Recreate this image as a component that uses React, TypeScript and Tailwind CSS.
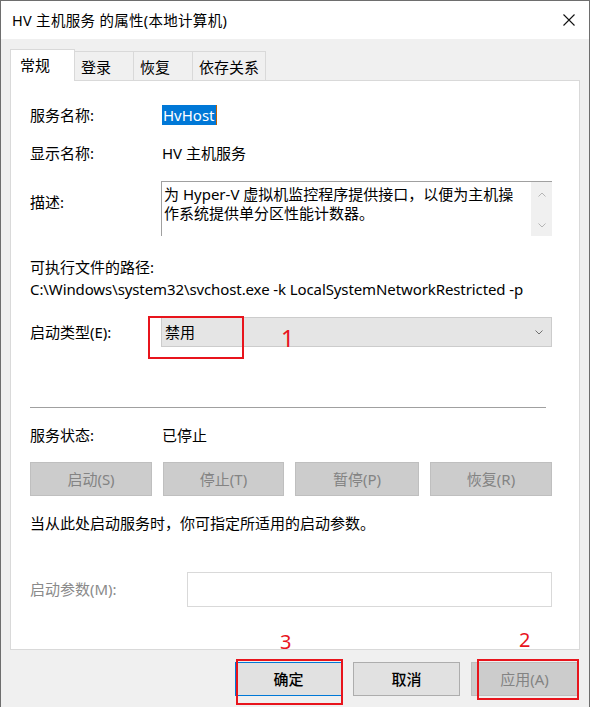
const FONT = "font-[family-name:'Noto_Sans','Noto_Sans_CJK_SC',sans-serif]";

function Tab({ label, active, width }: { label: string; active?: boolean; width: string }) {
  return active ? (
    <div className={`${width} h-[32px] -mb-px z-10 bg-white border border-b-0 border-[#d9d9d9] pl-[9px] pt-[3px] leading-[24px]`}>
      {label}
    </div>
  ) : (
    <div className={`${width} h-[29px] bg-[#f0f0f0] border border-b-0 border-l-0 border-[#d9d9d9] pl-[6px] pt-[3px] leading-[24px]`}>
      {label}
    </div>
  );
}

function Row({ label, children, className = "" }: { label: string; children?: React.ReactNode; className?: string }) {
  return (
    <div className={`flex h-[24px] items-center leading-[24px] ${className}`}>
      <div className="w-[132px] shrink-0">{label}</div>
      {children}
    </div>
  );
}

function Chevron({ up, className = "" }: { up?: boolean; className?: string }) {
  return (
    <svg width="8" height="5" viewBox="0 0 8 5" className={className}>
      <path d={up ? "M0.5 4.5 L4 1 L7.5 4.5" : "M0.5 0.5 L4 4 L7.5 0.5"} fill="none" stroke="currentColor" strokeWidth="1" />
    </svg>
  );
}

function GrayButton({ children, width }: { children: React.ReactNode; width: string }) {
  return (
    <div className={`${width} h-[34px] flex items-center justify-center bg-[#cccccc] border border-[#bfbfbf] text-[#838383]`}>
      {children}
    </div>
  );
}

export default function App() {
  return (
    <div className={`relative w-[590px] h-[707px] overflow-hidden border-x border-t border-[#6e6e6e] bg-[#f0f0f0] text-[15px] text-black ${FONT}`}>
      {/* title bar */}
      <div className="h-[38px] bg-white flex items-center justify-between pl-[11px] pr-[14px]">
        <span className="text-[14.5px] leading-[20px] tracking-[0.3px]">HV 主机服务 的属性(本地计算机)</span>
        <svg width="12" height="12" viewBox="0 0 12 12">
          <path d="M0.5 0.5 L11.5 11.5 M11.5 0.5 L0.5 11.5" stroke="#111" strokeWidth="1.1" />
        </svg>
      </div>

      {/* tabs */}
      <div className="flex items-end pl-[9px] pt-[10px]">
        <Tab label="常规" active width="w-[65px]" />
        <Tab label="登录" width="w-[59px]" />
        <Tab label="恢复" width="w-[59px]" />
        <Tab label="依存关系" width="w-[73px]" />
      </div>

      {/* panel */}
      <div className="mx-[9px] h-[570px] bg-white border border-[#d9d9d9] pl-[19px] pr-[27px] pt-[22px]">
        <Row label="服务名称:">
          <span className="bg-[#0078d7] text-white leading-[20px] px-px border-r border-[#c06000]">HvHost</span>
        </Row>
        <Row label="显示名称:" className="mt-[14px]">
          HV 主机服务
        </Row>

        <div className="flex mt-[16px]">
          <div className="w-[131px] shrink-0 pt-[9px] leading-[24px]">描述:</div>
          <div className="flex-1 h-[55px] flex border-t border-l border-[#a0a0a0]">
            <div className="flex-1 pl-[2px] pt-[3px] leading-[19px]">
              为 Hyper-V 虚拟机监控程序提供接口，以便为主机操
              <br />
              作系统提供单分区性能计数器。
            </div>
            <div className="w-[21px] bg-[#f0f0f0] flex flex-col items-center justify-between pt-[10px] pb-[8px] text-[#b5b5b5]">
              <Chevron up />
              <Chevron />
            </div>
          </div>
        </div>

        <div className="mt-[20px] leading-[22px]">可执行文件的路径:</div>
        <div className="leading-[22px] whitespace-nowrap tracking-[-0.1px]">C:\Windows\system32\svchost.exe -k LocalSystemNetworkRestricted -p</div>

        <div className="flex items-center mt-[17px]">
          <div className="w-[131px] shrink-0">启动类型(E):</div>
          <div className="flex-1 h-[30px] bg-[#e5e5e5] border border-[#cccccc] flex items-center justify-between pl-[3px] pr-[8px]">
            <span>禁用</span>
            <Chevron className="text-[#707070]" />
          </div>
        </div>

        <div className="mt-[60px] mr-[6px] h-px bg-[#a0a0a0]" />

        <Row label="服务状态:" className="mt-[15px]">
          已停止
        </Row>

        <div className="flex justify-between mt-[15px]">
          <GrayButton width="w-[122px]">启动(S)</GrayButton>
          <GrayButton width="w-[121px]">停止(T)</GrayButton>
          <GrayButton width="w-[124px]">暂停(P)</GrayButton>
          <GrayButton width="w-[122px]">恢复(R)</GrayButton>
        </div>

        <div className="mt-[15px] leading-[24px]">当从此处启动服务时，你可指定所适用的启动参数。</div>

        <div className="flex items-center mt-[37px]">
          <div className="w-[157px] shrink-0 text-[#8a8a8a]">启动参数(M):</div>
          <div className="flex-1 h-[35px] border border-[#d9d9d9] bg-white" />
        </div>
      </div>

      {/* dialog buttons */}
      <div className="flex justify-end gap-[11px] pr-[11px] mt-[12px]">
        <div className="w-[107px] h-[34px] flex items-center justify-center bg-[#e1e1e1] border border-[#0078d7] font-medium">确定</div>
        <div className="w-[107px] h-[34px] flex items-center justify-center bg-[#e1e1e1] border border-[#adadad] font-medium">取消</div>
        <div className="w-[107px] h-[34px] flex items-center justify-center bg-[#cccccc] border border-[#bfbfbf] text-[#838383]">应用(A)</div>
      </div>

      {/* red annotations */}
      <div className="absolute left-[147px] top-[315px] w-[96px] h-[43px] border-2 border-[#e8141c]" />
      <div className="absolute left-[280px] top-[322px] text-[23px] leading-[30px] text-[#e8141c]">1</div>
      <div className="absolute left-[279px] top-[627px] text-[20px] leading-[28px] text-[#e8141c]">3</div>
      <div className="absolute left-[235px] top-[658px] w-[107px] h-[46px] border-2 border-[#e8141c]" />
      <div className="absolute left-[518px] top-[625px] text-[20px] leading-[28px] text-[#e8141c]">2</div>
      <div className="absolute left-[476px] top-[658px] w-[102px] h-[41px] border-2 border-[#e8141c]" />
    </div>
  );
}
